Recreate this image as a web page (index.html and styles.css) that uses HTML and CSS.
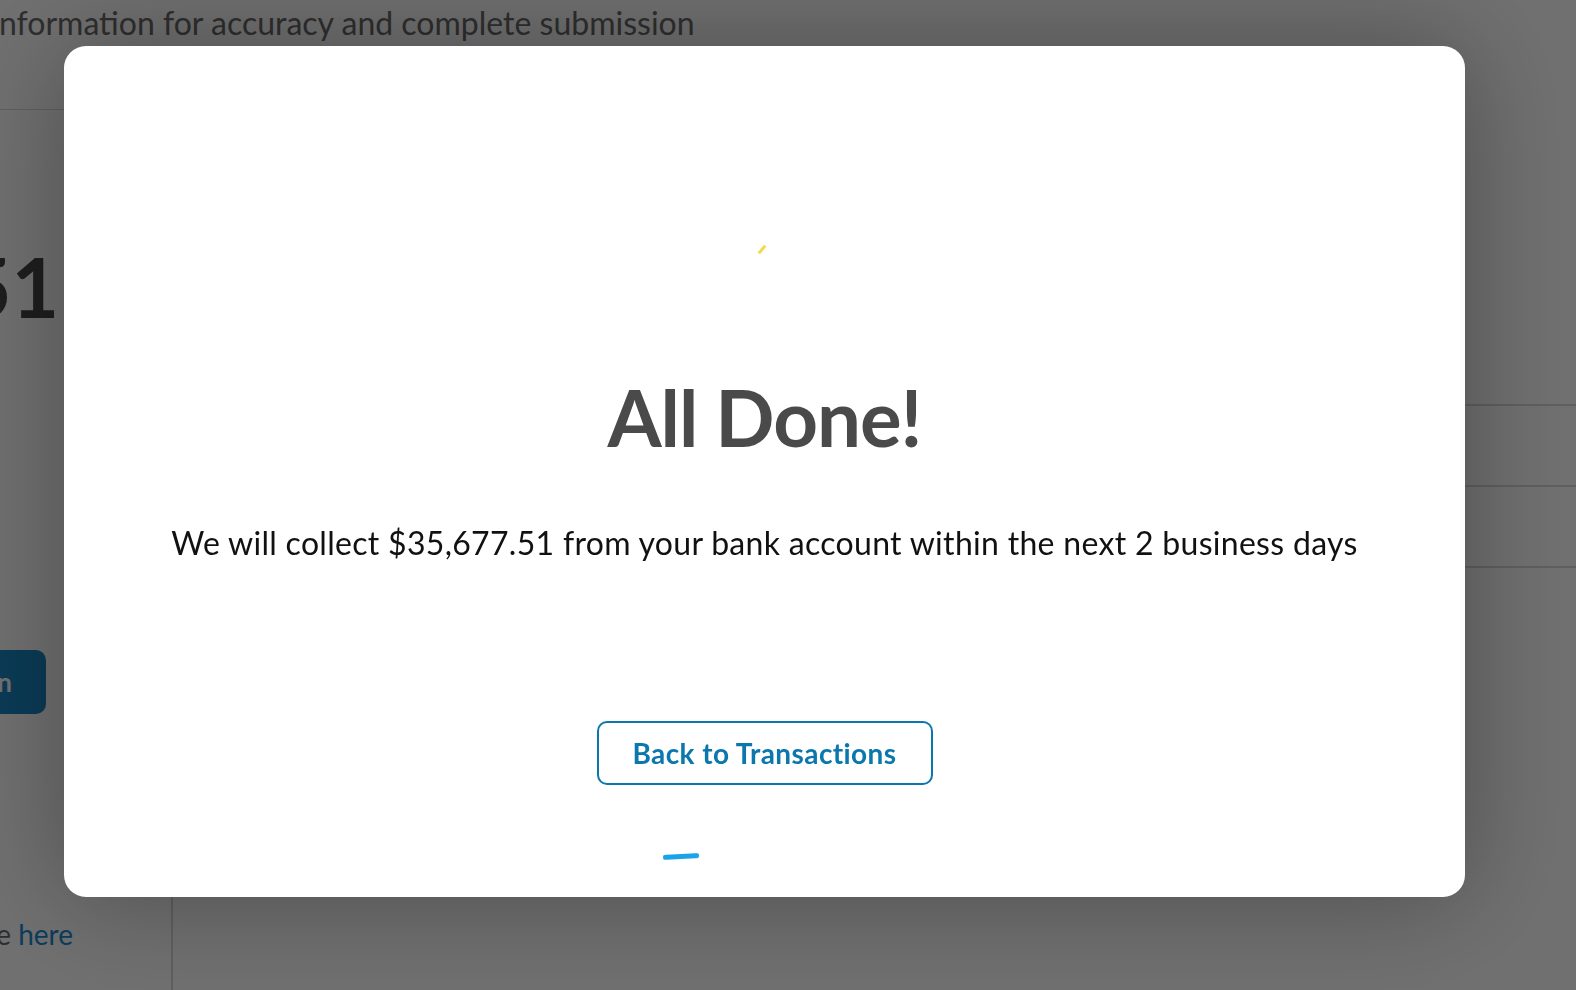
FILE: index.html
```html
<!DOCTYPE html>
<html lang="en">
<head>
<meta charset="utf-8">
<title>All Done</title>
<link rel="stylesheet" href="styles.css">
</head>
<body>
<div class="page">
  <header class="page-header">
    <p class="subtitle">nformation for accuracy and complete submission</p>
  </header>
  <div class="layout">
    <aside class="side">
      <div class="amount">51</div>
      <button class="primary">n</button>
      <a class="help">e <span class="link">here</span></a>
    </aside>
    <main class="rows">
      <div class="row"></div>
      <div class="row"></div>
      <div class="row"></div>
    </main>
  </div>
</div>

<div class="overlay">
  <div class="modal">
    <span class="confetti yellow"></span>
    <h1 class="title">All Done!</h1>
    <p class="message">We will collect $35,677.51 from your bank account within the next 2 business days</p>
    <button class="outline">Back to Transactions</button>
    <span class="confetti blue"></span>
  </div>
</div>
</body>
</html>
```
FILE: styles.css
```css
* { box-sizing: border-box; }
html, body { margin: 0; padding: 0; height: 100%; }
body {
  font-family: "Lato", "Open Sans", sans-serif;
  background: #ffffff;
  overflow: hidden;
}

.page { height: 990px; display: flex; flex-direction: column; }
.page-header {
  height: 110px;
  width: 1400px;
  border-bottom: 1px solid #d8d8d8;
}
.subtitle {
  margin: 0;
  padding-top: 3px;
  margin-left: -1px;
  font-size: 32px;
  line-height: 40px;
  color: #6a6a6a;
}
.layout { flex: 1; display: flex; }
.side {
  width: 173px;
  border-right: 2px solid #d8d8d8;
  display: flex;
  flex-direction: column;
  align-items: flex-end;
}
.amount {
  margin-top: 128px;
  margin-right: 112px;
  font-size: 82px;
  font-weight: 700;
  line-height: 96px;
  color: #444;
}
.primary {
  margin-top: 316px;
  margin-right: 125px;
  width: 120px;
  height: 64px;
  border: 0;
  border-radius: 10px;
  background: #1a86c3;
  color: #fff;
  font-family: inherit;
  font-size: 26px;
  font-weight: 700;
  text-align: right;
  padding-right: 34px;
}
.help {
  margin-top: 203px;
  margin-right: 98px;
  font-size: 28px;
  color: #6a6a6a;
  white-space: nowrap;
}
.link { color: #1a8ad0; }
.rows { flex: 1; padding-top: 215px; }
.row { height: 81px; border-bottom: 2px solid #d8d8d8; }

.overlay {
  position: fixed;
  inset: 0;
  background: rgba(0, 0, 0, 0.56);
  padding: 46px 0 0 64px;
}
.modal {
  position: relative;
  width: 1401px;
  height: 851px;
  background: #fff;
  border-radius: 22px;
  box-shadow: 0 0 110px rgba(0, 0, 0, 0.32);
  display: flex;
  flex-direction: column;
  align-items: center;
  padding-top: 324px;
}
.title {
  margin: 0;
  font-size: 78px;
  line-height: 94px;
  font-weight: 700;
  color: #4a4a4a;
  letter-spacing: -1px;
}
.message {
  margin: 61px 0 0;
  font-size: 32px;
  line-height: 36px;
  letter-spacing: 0.3px;
  color: #111;
}
.outline {
  margin-top: 160px;
  width: 336px;
  height: 64px;
  border: 2px solid #0c77ad;
  border-radius: 10px;
  background: #fff;
  color: #0c77ad;
  font-family: inherit;
  font-size: 28px;
  letter-spacing: 0.4px;
  font-weight: 700;
}
.confetti { position: absolute; display: block; filter: blur(0.6px); }
.confetti.yellow {
  left: 693px; top: 202px;
  width: 10px; height: 3px;
  background: #f5d94a;
  transform: rotate(-50deg);
}
.confetti.blue {
  left: 599px; top: 808px;
  width: 36px; height: 5px;
  border-radius: 2px;
  background: #1aa3e8;
  transform: rotate(-3deg);
}
```
